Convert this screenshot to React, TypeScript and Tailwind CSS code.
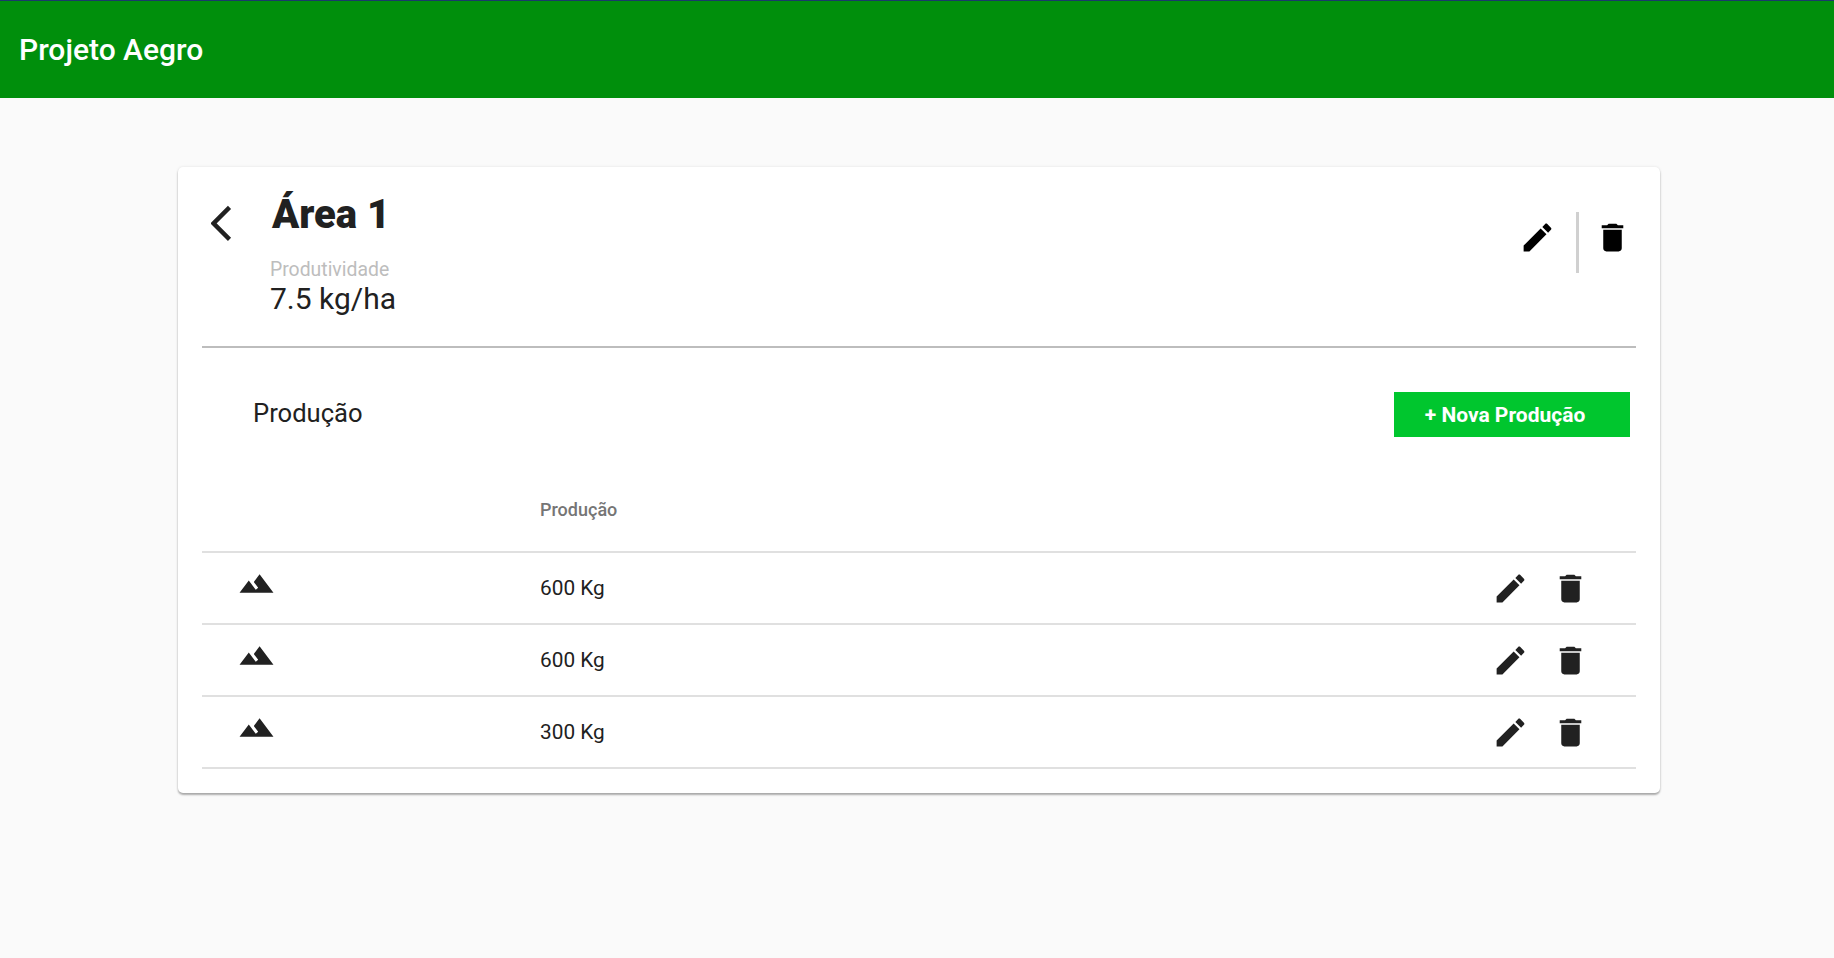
const EDIT = "M3 17.25V21h3.75L17.81 9.94l-3.75-3.75L3 17.25zM20.71 7.04c.39-.39.39-1.02 0-1.41l-2.34-2.34c-.39-.39-1.02-.39-1.41 0l-1.83 1.83 3.75 3.75 1.83-1.83z";
const TRASH = "M6 19c0 1.1.9 2 2 2h8c1.1 0 2-.9 2-2V7H6v12zM19 4h-3.5l-1-1h-5l-1 1H5v2h14V4z";
const TERRAIN = "M14 6l-3.75 5 2.85 3.8-1.6 1.2C9.81 13.75 7 10 7 10l-6 8h22L14 6z";

function Icon({ d, className }: { d: string; className: string }) {
  return (
    <svg viewBox="0 0 24 24" fill="currentColor" className={className}>
      <path d={d} />
    </svg>
  );
}

function Row({ value }: { value: string }) {
  return (
    <div className="flex h-[72px] items-center border-b-2 border-[#e0e0e0]">
      <div className="w-[338px] pl-[36px]">
        <Icon d={TERRAIN} className="w-[37px] h-[37px] text-[#212121] -mt-[9px]" />
      </div>
      <div className="flex-1 pt-[2px] text-[20.8px] text-[#212121]">{value}</div>
      <div className="flex items-center gap-[23px] pr-[47px] text-[#212121]">
        <Icon d={EDIT} className="w-[37px] h-[37px]" />
        <Icon d={TRASH} className="w-[37px] h-[37px]" />
      </div>
    </div>
  );
}

export default function App() {
  return (
    <div className="min-h-[958px] bg-[#fafafa] font-['Roboto',sans-serif]">
      <header className="flex h-[98px] items-center border-t border-[#1a3a6b] bg-[#008f0c] pl-[19px]">
        <h1 className="text-[30px] font-medium text-white">Projeto Aegro</h1>
      </header>
      <main className="flex justify-center pl-[4px] pt-[69px]">
        <div className="w-[1482px] rounded-[5px] bg-white px-[24px] pb-[24px] shadow-[0_2px_2px_rgba(0,0,0,0.3),0_0_3px_rgba(0,0,0,0.1)]">
          <div className="flex h-[181px] items-start justify-between border-b-2 border-[#bdbdbd]">
            <div className="flex">
              <svg viewBox="0 0 24 40" fill="none" stroke="#212121" strokeWidth="4.4" className="ml-[9px] mt-[36px] h-[40px] w-[24px]">
                <path d="M18.5 4.4 L2.5 20.4 L18.5 36.4" />
              </svg>
              <div className="ml-[35px]">
                <div className="pl-[2px] pt-[23px] text-[40px] font-black leading-[50px] text-[#212121]">Área 1</div>
                <div className="mt-[18px] text-[19.4px] leading-[24px] text-[#bdbdbd]">Produtividade</div>
                <div className="text-[30px] leading-[34px] text-[#212121]">7.5 kg/ha</div>
              </div>
            </div>
            <div className="mt-[45px] flex items-start">
              <Icon d={EDIT} className="mt-[7px] h-[37px] w-[37px] text-black" />
              <div className="ml-[20px] mr-[15px] h-[61px] w-[3px] bg-[#d0d0d0]" />
              <Icon d={TRASH} className="mt-[7px] h-[37px] w-[37px] text-black" />
              <div className="w-[5px]" />
            </div>
          </div>
          <div className="flex items-start justify-between pt-[44px]">
            <div className="pl-[51px] pt-[5px] text-[25.6px] leading-[32px] text-[#212121]">Produção</div>
            <button className="mr-[6px] h-[45px] w-[236px] bg-[#00c62e] pr-[14px] pt-[2px] text-[21px] font-bold text-white">+ Nova Produção</button>
          </div>
          <div className="mt-[47px] flex h-[69px] items-start border-b-2 border-[#e0e0e0] pl-[338px] pt-[12px] text-[18px] font-medium text-[#757575]">Produção</div>
          <Row value="600 Kg" />
          <Row value="600 Kg" />
          <Row value="300 Kg" />
        </div>
      </main>
    </div>
  );
}
